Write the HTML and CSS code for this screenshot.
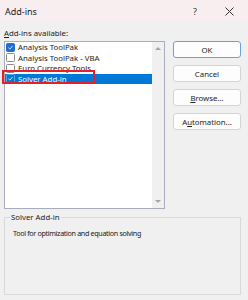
FILE: index.html
```html
<!DOCTYPE html>
<html>
<head>
<meta charset="utf-8">
<link rel="stylesheet" href="styles.css">
</head>
<body>
<div class="dialog">
  <div class="titlebar">
    <span class="title">Add-ins</span>
    <span class="help">?</span>
    <span class="close">
      <svg width="9" height="9" viewBox="0 0 9 9"><path d="M0.5 0.5 L8.5 8.5 M8.5 0.5 L0.5 8.5" stroke="#333" stroke-width="1" fill="none"/></svg>
    </span>
  </div>
  <div class="content">
    <div class="label"><u>A</u>dd-ins available:</div>
    <div class="main">
      <div class="listbox">
        <div class="items">
          <div class="row"><span class="cb checked"><svg viewBox="0 0 10 10"><path d="M2 5.2 L4.2 7.3 L8 2.8" stroke="#fff" stroke-width="1.1" fill="none"/></svg></span>Analysis ToolPak</div>
          <div class="row"><span class="cb"></span>Analysis ToolPak - VBA</div>
          <div class="row"><span class="cb"></span>Euro Currency Tools</div>
          <div class="row selected"><span class="cb sel"><svg viewBox="0 0 10 10"><path d="M2 5.2 L4.2 7.3 L8 2.8" stroke="#fff" stroke-width="1.1" fill="none"/></svg></span>Solver Add-in</div>
          <div class="highlight"></div>
        </div>
        <div class="scrollbar">
          <span class="arrow up"></span>
          <span class="arrow down"></span>
        </div>
      </div>
      <div class="buttons">
        <div class="btn default">OK</div>
        <div class="btn">Cancel</div>
        <div class="btn"><u>B</u>rowse...</div>
        <div class="btn">A<u>u</u>tomation...</div>
      </div>
    </div>
    <div class="group">
      <div class="legend">Solver Add-in</div>
      <div class="desc">Tool for optimization and equation solving</div>
    </div>
  </div>
</div>
</body>
</html>
```
FILE: styles.css
```css
html, body {
  margin: 0;
  padding: 0;
}
body {
  font-family: "Noto Sans", "Open Sans", sans-serif;
  font-size: 7.8px;
  color: #1a1a1a;
}
.dialog {
  width: 248px;
  height: 300px;
  background: #f0f0f0;
  overflow: hidden;
}
.titlebar {
  height: 22px;
  background: #f8eeef;
  display: flex;
  align-items: center;
  padding-left: 5px;
}
.title {
  font-size: 9px;
  color: #1a1a1a;
  flex: 1;
}
.help {
  font-size: 9px;
  color: #333;
  width: 10px;
  margin-right: 25px;
  text-align: center;
}
.close {
  width: 9px;
  height: 9px;
  margin-right: 14px;
  display: flex;
}
.content {
  padding: 5px 7px 0 4px;
}
.label {
  height: 12px;
  line-height: 12px;
  margin-bottom: 2px;
}
.main {
  display: flex;
  gap: 8px;
}
.listbox {
  width: 159px;
  height: 166px;
  border: 1px solid #a9adbb;
  background: #fff;
  display: flex;
}
.items {
  flex: 1;
  position: relative;
}
.row {
  height: 10.5px;
  display: flex;
  align-items: center;
  padding-left: 1px;
  white-space: nowrap;
}
.row.selected {
  background: #0078d7;
  color: #fff;
}
.cb {
  width: 9px;
  height: 9px;
  box-sizing: border-box;
  border: 1px solid #8a8a8a;
  border-radius: 1.5px;
  background: #fff;
  margin-right: 3px;
  display: flex;
}
.cb svg {
  width: 100%;
  height: 100%;
}
.cb.checked {
  background: #1d6fd1;
  border-color: #1d6fd1;
}
.cb.sel {
  background: #0078d7;
  border-color: #5aa6e8;
}
.highlight {
  position: absolute;
  left: -3px;
  top: 28px;
  width: 89px;
  height: 10px;
  border: 2px solid #e3202b;
}
.scrollbar {
  width: 12px;
  background: #f0f0f0;
  display: flex;
  flex-direction: column;
  justify-content: space-between;
  align-items: center;
  padding: 5px 0;
}
.arrow {
  width: 0;
  height: 0;
  border-left: 3px solid transparent;
  border-right: 3px solid transparent;
}
.arrow.up {
  border-bottom: 3px solid #a6a6a6;
}
.arrow.down {
  border-top: 3px solid #a6a6a6;
}
.buttons {
  display: flex;
  flex-direction: column;
  gap: 7px;
}
.btn {
  width: 68px;
  height: 17px;
  box-sizing: border-box;
  border: 1px solid #d4d4d4;
  border-radius: 3px;
  background: #fdfdfd;
  display: flex;
  align-items: center;
  justify-content: center;
  color: #222;
}
.btn.default {
  border-color: #6d9fd9;
}
.group {
  position: relative;
  margin-top: 8px;
  height: 78px;
  box-sizing: border-box;
  border: 1px solid #d9d9d9;
  padding: 10px 8px 0 8px;
}
.legend {
  position: absolute;
  top: -6px;
  left: 5px;
  padding: 0 1px;
  background: #f0f0f0;
  line-height: 10px;
}
.desc {
  font-size: 7.2px;
  letter-spacing: -0.35px;
}
```
